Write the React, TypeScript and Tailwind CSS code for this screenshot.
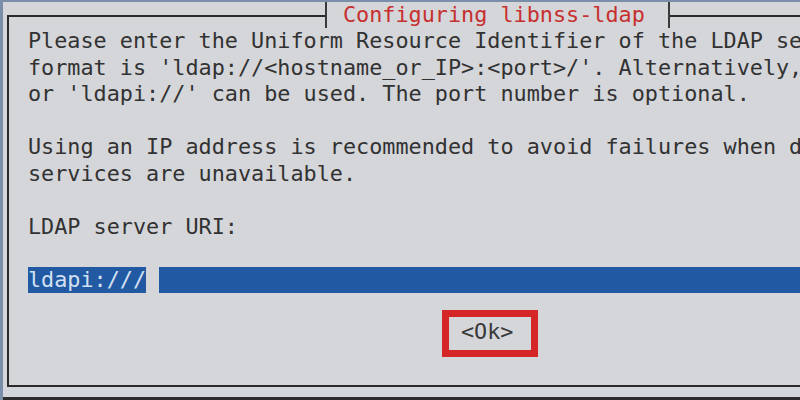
import React from "react";

const ROW = "h-[26.46px] leading-[26.46px] whitespace-pre";

export default function App() {
  return (
    <div
      className="w-[800px] h-[400px] overflow-hidden bg-[#d5d6da] border-t-2 border-l-[3px] border-[#7b8ea9] flex flex-col text-[21.8px] text-[#323232]"
      style={{ fontFamily: '"DejaVu Sans Mono", monospace' }}
    >
      <div className="ml-[4px] flex flex-col">
        {/* title row */}
        <div className="flex h-[26.46px]">
          <div className="w-[318px] mt-[13px] border-t-2 border-l-2 border-[#2a2a2a]" />
          <div className="w-[2px] bg-[#3a3a3a]" />
          <div className={`pl-[16px] pr-[23px] text-[#c6302f] ${ROW}`}>Configuring libnss-ldap</div>
          <div className="w-[2px] bg-[#3a3a3a]" />
          <div className="flex-1 mt-[13px] border-t-2 border-[#2a2a2a]" />
        </div>
        {/* body */}
        <div className="border-l-2 border-b-2 border-[#2a2a2a] pl-[19px] pb-[13px] flex flex-col">
          <div className={ROW}>Please enter the Uniform Resource Identifier of the LDAP server. The</div>
          <div className={ROW}>format is 'ldap://&lt;hostname_or_IP&gt;:&lt;port&gt;/'. Alternatively, 'ldap+ssl://'</div>
          <div className={ROW}>or 'ldapi://' can be used. The port number is optional.</div>
          <div className={ROW}> </div>
          <div className={ROW}>Using an IP address is recommended to avoid failures when domain name</div>
          <div className={ROW}>services are unavailable.</div>
          <div className={ROW}> </div>
          <div className={ROW}>LDAP server URI:</div>
          <div className={ROW}> </div>
          <div className={`flex ${ROW}`}>
            <span className="bg-[#2159a3] text-[#d3e0f2]">ldapi:///</span>
            <span className="w-[13.13px] shrink-0" />
            <span className="flex-1 bg-[#2159a3]" />
          </div>
          <div className={ROW}> </div>
          <div className={`flex ${ROW}`}>
            <span className="relative ml-[433px] text-[#383838]">
              &lt;Ok&gt;
              <span className="absolute left-[-19px] top-[-9.5px] w-[96px] h-[47px] border-[7px] border-[#d42626]" />
            </span>
          </div>
          <div className={ROW}> </div>
        </div>
      </div>
      <div className="flex-1 bg-[#d3d5dc]" />
      <div className="h-[3px] bg-[#2c2c2c]" />
    </div>
  );
}
